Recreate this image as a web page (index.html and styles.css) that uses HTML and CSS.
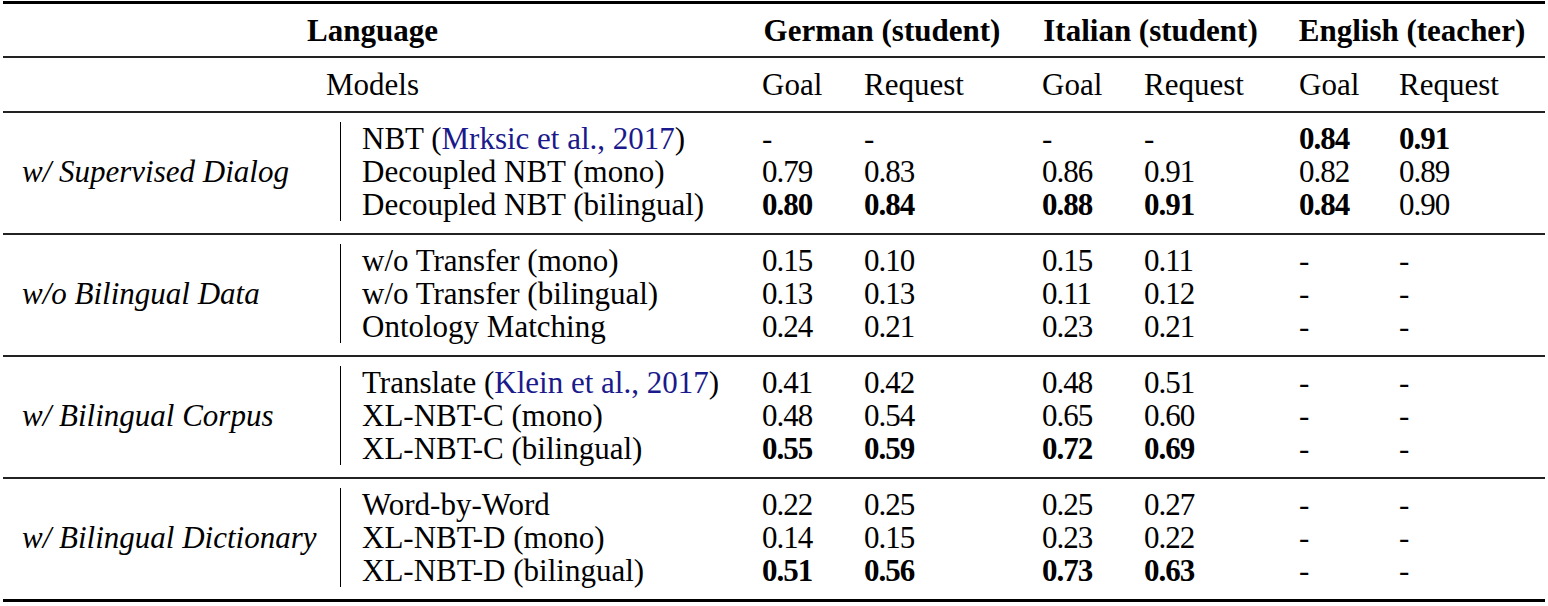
FILE: index.html
```html
<!DOCTYPE html>
<html>
<head>
<meta charset="utf-8">
<link rel="stylesheet" href="styles.css">
</head>
<body>
<div class="table">
  <div class="row head1">
    <div class="c span2 bold">Language</div>
    <div class="c span2c bold">German (student)</div>
    <div class="c span2c bold">Italian (student)</div>
    <div class="c span2c bold">English (teacher)</div>
  </div>
  <div class="row head2">
    <div class="c span2">Models</div>
    <div class="c l">Goal</div><div class="c l">Request</div>
    <div class="c l">Goal</div><div class="c l">Request</div>
    <div class="c l">Goal</div><div class="c l">Request</div>
  </div>

  <div class="group">
    <div class="label">w/ Supervised Dialog</div>
    <div class="m">NBT (<span class="cite">Mrksic et al., 2017</span>)</div>
    <div class="v">-</div><div class="v">-</div><div class="v">-</div><div class="v">-</div><div class="v b">0.84</div><div class="v b">0.91</div>
    <div class="m">Decoupled NBT (mono)</div>
    <div class="v">0.79</div><div class="v">0.83</div><div class="v">0.86</div><div class="v">0.91</div><div class="v">0.82</div><div class="v">0.89</div>
    <div class="m">Decoupled NBT (bilingual)</div>
    <div class="v b">0.80</div><div class="v b">0.84</div><div class="v b">0.88</div><div class="v b">0.91</div><div class="v b">0.84</div><div class="v">0.90</div>
  </div>

  <div class="group">
    <div class="label">w/o Bilingual Data</div>
    <div class="m">w/o Transfer (mono)</div>
    <div class="v">0.15</div><div class="v">0.10</div><div class="v">0.15</div><div class="v">0.11</div><div class="v">-</div><div class="v">-</div>
    <div class="m">w/o Transfer (bilingual)</div>
    <div class="v">0.13</div><div class="v">0.13</div><div class="v">0.11</div><div class="v">0.12</div><div class="v">-</div><div class="v">-</div>
    <div class="m">Ontology Matching</div>
    <div class="v">0.24</div><div class="v">0.21</div><div class="v">0.23</div><div class="v">0.21</div><div class="v">-</div><div class="v">-</div>
  </div>

  <div class="group">
    <div class="label">w/ Bilingual Corpus</div>
    <div class="m">Translate (<span class="cite">Klein et al., 2017</span>)</div>
    <div class="v">0.41</div><div class="v">0.42</div><div class="v">0.48</div><div class="v">0.51</div><div class="v">-</div><div class="v">-</div>
    <div class="m">XL-NBT-C (mono)</div>
    <div class="v">0.48</div><div class="v">0.54</div><div class="v">0.65</div><div class="v">0.60</div><div class="v">-</div><div class="v">-</div>
    <div class="m">XL-NBT-C (bilingual)</div>
    <div class="v b">0.55</div><div class="v b">0.59</div><div class="v b">0.72</div><div class="v b">0.69</div><div class="v">-</div><div class="v">-</div>
  </div>

  <div class="group last">
    <div class="label">w/ Bilingual Dictionary</div>
    <div class="m">Word-by-Word</div>
    <div class="v">0.22</div><div class="v">0.25</div><div class="v">0.25</div><div class="v">0.27</div><div class="v">-</div><div class="v">-</div>
    <div class="m">XL-NBT-D (mono)</div>
    <div class="v">0.14</div><div class="v">0.15</div><div class="v">0.23</div><div class="v">0.22</div><div class="v">-</div><div class="v">-</div>
    <div class="m">XL-NBT-D (bilingual)</div>
    <div class="v b">0.51</div><div class="v b">0.56</div><div class="v b">0.73</div><div class="v b">0.63</div><div class="v">-</div><div class="v">-</div>
  </div>
</div>
</body>
</html>
```

FILE: styles.css
```css
html, body {
  margin: 0;
  padding: 0;
  background: #ffffff;
}
body {
  font-family: "Liberation Serif", "Times New Roman", serif;
  font-size: 31px;
  color: #000;
}
.table {
  margin: 1px 3px 0 3px;
  width: 1542px;
  border-top: 3px solid #000;
  border-bottom: 3px solid #000;
}
.row, .group {
  display: grid;
  grid-template-columns: 337px 402px 102px 178px 102px 155px 100px 166px;
}
.row {
  border-bottom: 2px solid #222;
  align-items: center;
}
.head1 { height: 52px; }
.head2 { height: 53px; }
.c { line-height: 33px; white-space: nowrap; }
.span2 { grid-column: span 2; text-align: center; }
.span2c { grid-column: span 2; text-align: center; }
.l { padding-left: 20px; }
.bold { font-weight: bold; }

.group {
  grid-template-rows: 33px 33px 33px;
  padding: 9px 0 12px 0;
  border-bottom: 2px solid #222;
}
.group.last { border-bottom: none; }
.label {
  grid-row: 1 / span 3;
  grid-column: 1;
  align-self: center;
  padding-left: 19px;
  font-style: italic;
  line-height: 33px;
  white-space: nowrap;
}
.m {
  grid-column: 2;
  border-left: 1px solid #000;
  padding-left: 21px;
  line-height: 33px;
  white-space: nowrap;
}
.v {
  padding-left: 20px;
  line-height: 33px;
  white-space: nowrap;
  letter-spacing: -1px;
}
.b { font-weight: bold; }
.cite { color: #1a1a8c; }
```
